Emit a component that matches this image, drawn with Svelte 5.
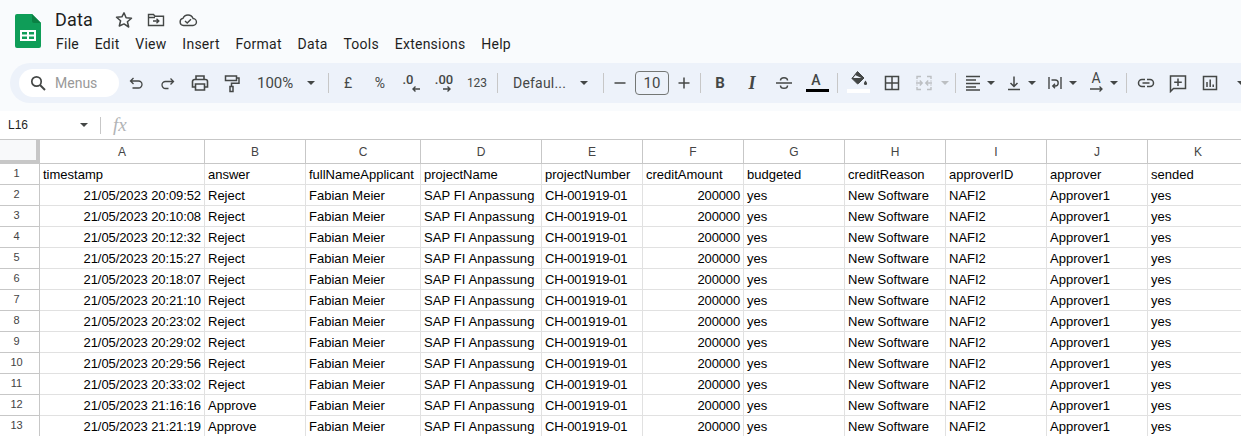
<script>
  const cols = [
    { l: 'A', w: 165 }, { l: 'B', w: 101 }, { l: 'C', w: 115 }, { l: 'D', w: 121 },
    { l: 'E', w: 101 }, { l: 'F', w: 101 }, { l: 'G', w: 101 }, { l: 'H', w: 101 },
    { l: 'I', w: 101 }, { l: 'J', w: 101 }, { l: 'K', w: 101 }
  ];
  const head = ['timestamp','answer','fullNameApplicant','projectName','projectNumber','creditAmount','budgeted','creditReason','approverID','approver','sended'];
  const stamps = [
    ['20:09:52','Reject'],['20:10:08','Reject'],['20:12:32','Reject'],['20:15:27','Reject'],
    ['20:18:07','Reject'],['20:21:10','Reject'],['20:23:02','Reject'],['20:29:02','Reject'],
    ['20:29:56','Reject'],['20:33:02','Reject'],['21:16:16','Approve'],['21:21:19','Approve']
  ];
  const menus = ['File','Edit','View','Insert','Format','Data','Tools','Extensions','Help'];
  const template = cols.map((c) => c.w + 'px').join(' ');
</script>

<div class="page">
  <header class="top">
    <svg class="logo" width="26" height="34" viewBox="0 0 26 34">
      <path d="M2 0h15l9 9v23a2 2 0 0 1-2 2H2a2 2 0 0 1-2-2V2a2 2 0 0 1 2-2z" fill="#0f9d58"/>
      <path d="M17 0l9 9h-7a2 2 0 0 1-2-2z" fill="#0b8043"/>
      <path d="M5 16h16v11H5z" fill="#fff"/>
      <path d="M7 18h5v2.5H7zM14 18h5v2.5h-5zM7 22.5h5V25H7zM14 22.5h5V25h-5z" fill="#0f9d58"/>
    </svg>
    <div class="titles">
      <div class="titlebar">
        <span class="doc">Data</span>
        <svg class="ic star" width="20" height="20" viewBox="0 0 20 20"><path d="M10 2.800l2.100 5 5.400.4-4.100 3.500 1.300 5.300L10 13.900l-4.700 2.100 1.300-5.300-4.100-3.500 5.400-.4z" fill="none" stroke="#444746" stroke-width="1.500" stroke-linejoin="round"/></svg>
        <svg class="ic move" width="20" height="20" viewBox="0 0 20 20"><path d="M2.500 15.500V4.500h5l1.500 1.800h8.500v9.200zM2.500 7.500h6.500" fill="none" stroke="#444746" stroke-width="1.400"/><path d="M7 11h5.500M10.500 8.800l2.300 2.200-2.300 2.200" fill="none" stroke="#444746" stroke-width="1.400"/></svg>
        <svg class="ic cloud" width="20" height="20" viewBox="0 0 20 20"><path d="M5.500 15.500a3.600 3.600 0 0 1-.6-7.100 5.500 5.500 0 0 1 10.200.1 3.500 3.500 0 0 1-.3 7z" fill="none" stroke="#444746" stroke-width="1.400"/><path d="M7 11l2.200 2.100 3.800-3.800" fill="none" stroke="#444746" stroke-width="1.400"/></svg>
      </div>
      <nav class="menu">
        {#each menus as m}<span>{m}</span>{/each}
      </nav>
    </div>
  </header>

  <div class="toolbar">
    <div class="search">
      <svg width="18" height="18" viewBox="0 0 18 18"><circle cx="7.500" cy="7.500" r="4.700" fill="none" stroke="#444746" stroke-width="1.700"/><path d="M11 11l5 5" stroke="#444746" stroke-width="2"/></svg>
      <span>Menus</span>
    </div>
    <span class="btn"><svg width="20" height="20" viewBox="0 0 20 20"><path d="M7.500 5L4.500 8l3 3M4.500 8h8a3.500 3.500 0 0 1 0 7H6.500" fill="none" stroke="#444746" stroke-width="1.300"/></svg></span>
    <span class="btn"><svg width="20" height="20" viewBox="0 0 20 20"><path d="M12.500 5.500l3 3-3 3M15.500 8.500h-8a3.500 3.500 0 0 0 0 7h3" fill="none" stroke="#444746" stroke-width="1.300"/></svg></span>
    <span class="btn"><svg width="20" height="20" viewBox="0 0 20 20"><path d="M6 6.500V3h8v3.500M5.500 14H2.500V8.500a2 2 0 0 1 2-2h11a2 2 0 0 1 2 2V14h-3M5.500 11h9v6h-9z" fill="none" stroke="#444746" stroke-width="1.600"/></svg></span>
    <span class="btn"><svg width="20" height="20" viewBox="0 0 20 20"><path d="M3.500 3h11v4.500h-11zM14.500 5h2.500v5.200H9.500v3M8 13.500h3v5H8z" fill="none" stroke="#444746" stroke-width="1.500"/></svg></span>
    <span class="zoomctl"><span>100%</span><i class="tri"></i></span>
    <i class="sep"></i>
    <span class="btn txt">£</span>
    <span class="btn txt">%</span>
    <span class="btn dec"><span>.0</span><svg width="10" height="8" viewBox="0 0 10 8"><path d="M9 4H2M4.500 1.500L2 4l2.500 2.500" fill="none" stroke="#444746" stroke-width="1.400"/></svg></span>
    <span class="btn dec wide"><span>.00</span><svg width="10" height="8" viewBox="0 0 10 8"><path d="M1 4h7M5.500 1.500L8 4 5.500 6.500" fill="none" stroke="#444746" stroke-width="1.400"/></svg></span>
    <span class="btn txt small">123</span>
    <i class="sep s-font"></i>
    <span class="fontctl"><span>Defaul...</span><i class="tri"></i></span>
    <i class="sep tight"></i>
    <span class="btn"><svg width="20" height="20" viewBox="0 0 20 20"><path d="M4.500 10h11" stroke="#444746" stroke-width="1.500"/></svg></span>
    <span class="size">10</span>
    <span class="btn"><svg width="20" height="20" viewBox="0 0 20 20"><path d="M4.500 10h11M10 4.500v11" stroke="#444746" stroke-width="1.500"/></svg></span>
    <i class="sep flat"></i>
    <span class="btn bold">B</span>
    <span class="btn ital">I</span>
    <span class="btn"><svg width="20" height="20" viewBox="0 0 20 20"><path d="M6.500 7.500a3.500 2.800 0 0 1 7 0M2 10h16M6.500 12.500a3.500 2.800 0 0 0 7 0" fill="none" stroke="#444746" stroke-width="1.500"/></svg></span>
    <span class="btn color"><span>A</span><i></i></span>
    <i class="sep s-fill"></i>
    <span class="btn fill">
      <svg width="20" height="20" viewBox="0 0 20 20"><path d="M8.500 1.500l6.500 6.500-5.500 5.500a1 1 0 0 1-1.400 0L3 8.500z M6 5L3 8.500h10.500" fill="#444746" stroke="#444746" stroke-width="1"/><path d="M16.500 10.500c1 1.500 1.600 2.200 1.600 3a1.600 1.600 0 0 1-3.200 0c0-.8.600-1.500 1.600-3z" fill="#444746"/></svg>
      <i></i>
    </span>
    <span class="btn borders"><svg width="20" height="20" viewBox="0 0 20 20"><path d="M3.500 3.500h13v13h-13zM10 3.500v13M3.500 10h13" fill="none" stroke="#444746" stroke-width="1.500"/></svg></span>
    <span class="btn arrowed off">
      <svg width="20" height="20" viewBox="0 0 20 20"><path d="M3 6V3.500h4M3 14v2.500h4M17 6V3.500h-4M17 14v2.500h-4M2 10h6M5.800 7.500L8.200 10l-2.400 2.500M18 10h-6M14.200 7.500L11.800 10l2.400 2.500M3 7.500v1M17 7.500v1M3 11.500v1M17 11.500v1" fill="none" stroke="#bcbfc2" stroke-width="1.400"/></svg>
      <i class="tri"></i>
    </span>
    <i class="sep low"></i>
    <span class="btn arrowed">
      <svg width="20" height="20" viewBox="0 0 20 20"><path d="M3 3.500h14M3 7h10M3 10.500h14M3 14h10M3 17h14" stroke="#444746" stroke-width="1.300"/></svg>
      <i class="tri"></i>
    </span>
    <span class="btn arrowed">
      <svg width="20" height="20" viewBox="0 0 20 20"><path d="M4 16.500h12M10 3.500v10M6.500 10l3.500 3.500 3.500-3.500" fill="none" stroke="#444746" stroke-width="1.500"/></svg>
      <i class="tri"></i>
    </span>
    <span class="btn arrowed">
      <svg width="20" height="20" viewBox="0 0 20 20"><path d="M4 4v12M16 4v12M6.500 7h3.700a3 3 0 0 1 0 6H8M10 10.800L7.800 13l2.200 2.200" fill="none" stroke="#444746" stroke-width="1.400"/></svg>
      <i class="tri"></i>
    </span>
    <span class="btn arrowed rot">
      <span class="rotbox"><span>A</span><svg width="18" height="8" viewBox="0 0 18 8"><path d="M3 4h12M12.500 1.500L15 4l-2.500 2.500" fill="none" stroke="#444746" stroke-width="1.300"/></svg></span>
      <i class="tri"></i>
    </span>
    <i class="sep s-link"></i>
    <span class="btn"><svg width="20" height="20" viewBox="0 0 20 20"><path d="M9 6.500H6a3.500 3.500 0 0 0 0 7h3M11 6.500h3a3.500 3.500 0 0 1 0 7h-3M6.500 10h7" fill="none" stroke="#444746" stroke-width="1.500"/></svg></span>
    <span class="btn"><svg width="20" height="20" viewBox="0 0 20 20"><path d="M2.500 3h15v12.500H5.500l-3 3zM10 5.500v7.500M6.200 9.200h7.600" fill="none" stroke="#444746" stroke-width="1.500"/></svg></span>
    <span class="btn"><svg width="20" height="20" viewBox="0 0 20 20"><path d="M3.500 3.500h13v13h-13zM7 9v5M10.200 6.500V14M13.200 11.500V14" fill="none" stroke="#444746" stroke-width="1.500"/></svg></span>
    <span class="btn"><i class="tri big"></i></span>
  </div>

  <div class="formula">
    <span class="cellref">L16</span>
    <i class="tri"></i>
    <i class="fsep"></i>
    <span class="fx">fx</span>
  </div>

  <div class="sheet">
    <div class="row colhead" style="grid-template-columns: 40px {template}">
      <div class="corner"></div>
      {#each cols as c}<div class="ch">{c.l}</div>{/each}
    </div>
    <div class="row" style="grid-template-columns: 40px {template}">
      <div class="rh">1</div>
      {#each head as h}<div class="c">{h}</div>{/each}
    </div>
    {#each stamps as s, i}
      <div class="row data" style="grid-template-columns: 40px {template}">
        <div class="rh">{i + 2}</div>
        <div class="c r">21/05/2023 {s[0]}</div>
        <div class="c">{s[1]}</div>
        <div class="c">Fabian Meier</div>
        <div class="c">SAP FI Anpassung</div>
        <div class="c">CH-001919-01</div>
        <div class="c r">200000</div>
        <div class="c">yes</div>
        <div class="c">New Software</div>
        <div class="c">NAFI2</div>
        <div class="c">Approver1</div>
        <div class="c">yes</div>
      </div>
    {/each}
  </div>
</div>

<style>
  :global(body) { margin: 0; overflow: hidden; background: #f9fbfd; }
  .page { width: 1241px; height: 436px; overflow: hidden; font-family: Roboto, "Liberation Sans", sans-serif; color: #1f1f1f; background: #f9fbfd; }
  i { display: block; font-style: normal; }

  .top { display: flex; height: 63px; box-sizing: border-box; padding: 14px 0 0 15px; }
  .logo { flex: none; }
  .titles { margin: -7px 0 0 14px; }
  .titlebar { display: flex; align-items: center; height: 24px; }
  .doc { font-size: 18px; width: 59px; letter-spacing: .2px; }
  .ic { display: block; margin: 2px 12px 0 0; }
  .menu { display: flex; margin: 3px 0 0 1px; font-size: 14px; line-height: 20px; color: #1f1f1f; letter-spacing: .25px; }
  .menu span { margin-right: 15.8px; }

  .toolbar { display: flex; align-items: center; width: 1300px; height: 40px; margin-left: 10px; padding-left: 9px; box-sizing: border-box; border-radius: 20px; background: #edf2fa; color: #444746; }
  .search { display: flex; align-items: center; flex: none; box-sizing: border-box; width: 100px; height: 28px; padding-left: 10px; margin-right: 1px; border-radius: 14px; background: #fff; font-size: 14px; color: #999; }
  .search span { margin-left: 8px; }
  .btn { display: flex; align-items: center; justify-content: center; flex: none; width: 32px; height: 28px; }
  .txt { font-size: 14px; }
  .small { font-size: 12px; }
  .dec { position: relative; font-size: 13px; font-weight: 500; }
  .dec span { margin-top: -7px; margin-right: 8px; }
  .dec svg { position: absolute; left: 15px; top: 16px; }
  .wide { margin-left: 1px; }
  .wide span { margin-right: 2px; }
  .wide svg { left: 13px; }
  .tri { flex: none; width: 0; height: 0; border: 4px solid transparent; border-top: 4px solid #444746; border-bottom: 0; }
  .tri.big { border-width: 5px 5px 0; }
  .zoomctl { display: flex; align-items: center; flex: none; box-sizing: border-box; width: 76px; padding-left: 9px; font-size: 15px; }
  .zoomctl span { width: 37px; }
  .zoomctl .tri { margin-left: 13px; }
  .sep { flex: none; width: 1px; height: 20px; margin: 0 3px 0 4px; background: #c7c7c7; }
  .sep.s-font { margin: 0 4px 0 4px; }
  .sep.tight { margin: 0 0 0 4px; }
  .sep.flat { margin: 0 3px 0 0; }
  .sep.s-fill { margin: 0 4px 0 5px; }
  .sep.low { margin: 0 1px 0 6px; }
  .sep.s-link { margin: 0 3px 0 5px; }
  .fontctl { display: flex; align-items: center; flex: none; box-sizing: border-box; width: 97px; padding-left: 11px; font-size: 14px; letter-spacing: .2px; }
  .fontctl span { width: 67px; }
  .size { flex: none; box-sizing: border-box; width: 34px; height: 24px; margin: 0 -1px; border: 1px solid #747775; border-radius: 4px; text-align: center; font-size: 15px; line-height: 22px; }
  .bold { font-size: 15px; font-weight: 700; font-family: Roboto, sans-serif; }
  .ital { font: italic 700 18px "Liberation Serif", serif; }
  .color { position: relative; font-size: 14px; font-weight: 500; }
  .color span { margin-top: -6px; }
  .color i { position: absolute; left: 6px; top: 20px; width: 23px; height: 3px; background: #000; }
  .fill { position: relative; margin-left: 1px; }
  .fill svg { margin-top: -6px; }
  .fill i { position: absolute; left: 4px; top: 20px; width: 23px; height: 4px; background: #fff; }
  .borders { margin-left: 1px; }
  .arrowed { width: 41px; justify-content: flex-start; gap: 4px; padding-left: 6px; box-sizing: border-box; }
  .off { gap: 7px; }
  .off .tri { border-top-color: #bcbfc2; }
  .rotbox { display: flex; flex-direction: column; align-items: center; width: 20px; font-size: 14px; line-height: 13px; }
  .rotbox span { margin-top: -1px; }
  .rotbox svg { display: block; }

  .formula { display: flex; align-items: center; height: 28px; margin-top: 8px; background: #fff; font-size: 12px; }
  .cellref { width: 72px; padding-left: 8px; font-family: "Liberation Sans", sans-serif; color: #1f1f1f; }
  .formula .tri { margin-right: 12px; }
  .fsep { width: 1px; height: 17px; background: #c7c7c7; }
  .fx { margin-left: 12px; font: italic 19px "Liberation Serif", serif; color: #b2b4b6; }

  .sheet { background: #fff; border-top: 1px solid #c7c7c7; font-family: "Liberation Sans", Arial, sans-serif; }
  .row { display: grid; height: 21px; }
  .colhead { height: 24px; }
  .corner { box-sizing: border-box; background: #f8f9fa; border-right: 4px solid #c7c7c7; border-bottom: 4px solid #c7c7c7; }
  .ch { display: flex; align-items: center; justify-content: center; box-sizing: border-box; border-right: 1px solid #c7c7c7; border-bottom: 1px solid #c7c7c7; font-size: 12px; color: #444; }
  .rh { box-sizing: border-box; padding-right: 6px; border-right: 1px solid #c7c7c7; border-bottom: 1px solid #c7c7c7; text-align: center; font-size: 11px; line-height: 19px; color: #444; }
  .c { box-sizing: border-box; padding: 0 3px; border-right: 1px solid #e1e1e1; border-bottom: 1px solid #e1e1e1; font-size: 13px; line-height: 21px; color: #000; white-space: nowrap; overflow: hidden; }
  .r { text-align: right; }
  .data .c:nth-child(2) { letter-spacing: -.1px; }
  .data .c:nth-child(5) { letter-spacing: .1px; }
  .data .c:nth-child(6) { letter-spacing: -.25px; }
  .data .c:nth-child(7) { letter-spacing: -.15px; }
</style>
